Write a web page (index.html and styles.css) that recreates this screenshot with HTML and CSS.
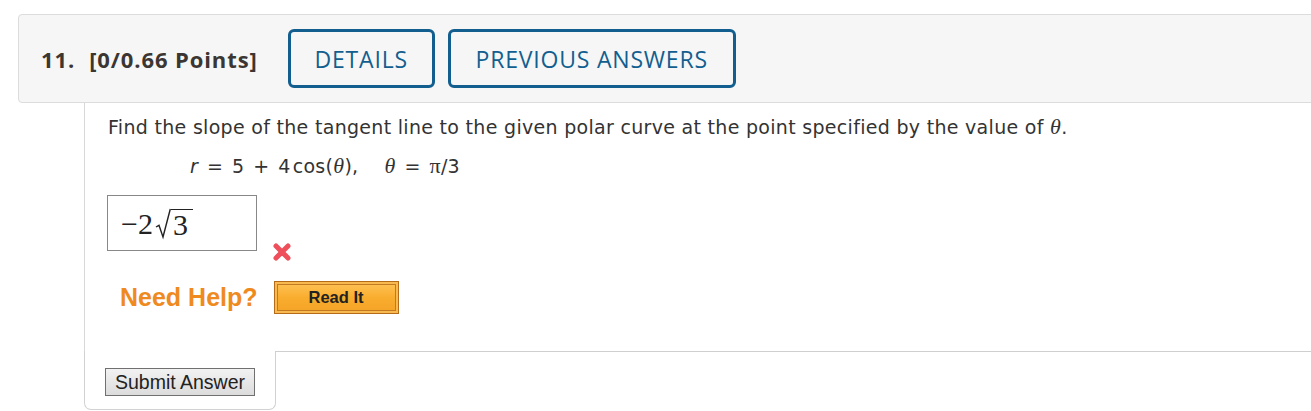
FILE: index.html
```html
<!DOCTYPE html>
<html>
<head>
<meta charset="utf-8">
<link rel="stylesheet" href="styles.css">
</head>
<body>
<div class="page">
  <div class="q-header">
    <span class="q-num">11.</span>
    <span class="q-points">[0/0.66 Points]</span>
    <button class="hdr-btn btn-details">DETAILS</button>
    <button class="hdr-btn btn-prev">PREVIOUS ANSWERS</button>
  </div>
  <div class="q-body">
    <p class="q-text">Find the slope of the tangent line to the given polar curve at the point specified by the value of <span class="mvar">θ</span>.</p>
    <p class="q-eq"><span class="ivar">r</span> = 5 + 4<span class="fn">cos</span>(<span class="mvar">θ</span>),<span class="eq-gap"></span><span class="mvar">θ</span> = <span class="mpi">π</span>/3</p>
    <div class="answer-row">
      <div class="answer-box"><span class="tex">−2<span class="sqrt"><svg class="rad" width="16" height="32" viewBox="0 0 16 32"><path d="M1 19 L4 17.3 L8 29 L15.3 1" fill="none" stroke="#222" stroke-width="1.4"/></svg><span class="radicand">3</span></span></span></div>
      <svg class="wrong" width="20" height="20" viewBox="0 0 20 20"><path d="M4 4 L16 16 M16 4 L4 16" stroke="#ee4f5a" stroke-width="5" stroke-linecap="round"/></svg>
    </div>
    <div class="help-row">
      <span class="need-help">Need Help?</span>
      <button class="read-it">Read It</button>
    </div>
  </div>
  <div class="q-footer">
    <div class="submit-box"><button class="submit-btn">Submit Answer</button></div>
    <div class="footer-fill"></div>
  </div>
</div>
</body>
</html>
```
FILE: styles.css
```css
html, body { margin: 0; padding: 0; background: #fff; }
.page { padding: 14px 0 0 18px; overflow: hidden; width: 1293px; }
.q-header {
  box-sizing: border-box;
  width: 1310px;
  height: 89px;
  background: #f6f6f6;
  border: 1px solid #dcdcdc;
  border-radius: 4px;
  display: flex;
  align-items: center;
  padding-left: 22px;
  font-family: "Open Sans", sans-serif;
}
.q-num { font-weight: 700; font-size: 22px; letter-spacing: 0.9px; color: #3b3633; margin-right: 14px; }
.q-points { font-weight: 700; font-size: 22px; letter-spacing: 0.9px; color: #3b3633; margin-right: 30px; }
.hdr-btn {
  box-sizing: border-box;
  height: 59px;
  background: transparent;
  border: 3px solid #125f8f;
  border-radius: 6px;
  color: #125f8f;
  font-family: "Open Sans", sans-serif;
  font-size: 23px;
  letter-spacing: 0.8px;
  padding: 0;
}
.btn-details { width: 147px; margin-right: 13px; }
.btn-prev { width: 288px; }
.q-body {
  margin-left: 66px;
  border-left: 1px solid #d8d8d8;
  padding: 12px 0 0 23px;
  font-family: Verdana, "DejaVu Sans", sans-serif;
  color: #333;
  height: 248px;
  box-sizing: border-box;
}
.q-text { margin: 0; font-size: 19px; letter-spacing: 0.3px; line-height: 24px; }
.q-eq { margin: 15px 0 0 82px; font-size: 19px; letter-spacing: 0.3px; line-height: 24px; word-spacing: 2.5px; }
.ivar { font-style: italic; }
.fn { margin-left: 2px; }
.mvar, .mpi { font-family: "Liberation Serif", "DejaVu Serif", serif; font-style: italic; font-size: 22px; }
.mpi { font-style: normal; }
.eq-gap { display: inline-block; width: 26px; }
.answer-row { display: flex; align-items: flex-start; margin-top: 17px; }
.answer-box {
  box-sizing: border-box;
  width: 150px; height: 56px;
  border: 1px solid #888;
  margin-left: -1px;
  display: flex; align-items: center;
  padding-left: 13px;
}
.tex { font-family: "Liberation Serif", "DejaVu Serif", serif; font-size: 30px; color: #222; display: flex; align-items: center; margin-top: 2px; }
.sqrt { display: inline-flex; align-items: flex-end; margin-left: 2px; }
.rad { display: block; }
.radicand { border-top: 1.4px solid #222; line-height: 30px; padding: 0 5px 0 2px; }
.wrong { margin: 47px 0 0 15px; }
.help-row { display: flex; align-items: center; margin-top: 19px; padding-left: 12px; }
.need-help { font-family: Arial, "Liberation Sans", sans-serif; font-weight: 700; font-size: 25px; color: #ef8a1e; margin-right: 16px; }
.read-it {
  box-sizing: border-box;
  width: 125px; height: 33px;
  background: linear-gradient(#ffc458, #f9ad2f 50%, #f4a224);
  border: 1px solid #b56b18;
  box-shadow: inset 0 0 0 2px #f8b950, inset 0 0 0 3px #c27a22;
  font-family: Arial, "Liberation Sans", sans-serif;
  font-weight: 700; font-size: 16.5px; color: #222;
  padding: 0;
}
.q-footer { display: flex; margin-left: 66px; }
.submit-box {
  box-sizing: border-box;
  width: 192px; height: 59px;
  border: 1px solid #d2d2d2; border-top: none;
  border-radius: 0 0 7px 7px;
  padding: 17px 0 0 20px;
}
.submit-btn {
  box-sizing: border-box;
  width: 150px; height: 28px;
  background: linear-gradient(#f2f2f2, #dcdcdc);
  border: 1px solid #707070;
  font-family: Arial, "Liberation Sans", sans-serif;
  font-size: 19.5px; color: #222;
  padding: 0;
}
.footer-fill { flex: 1; border-top: 1px solid #cfcfcf; margin-left: -1px; }
```
